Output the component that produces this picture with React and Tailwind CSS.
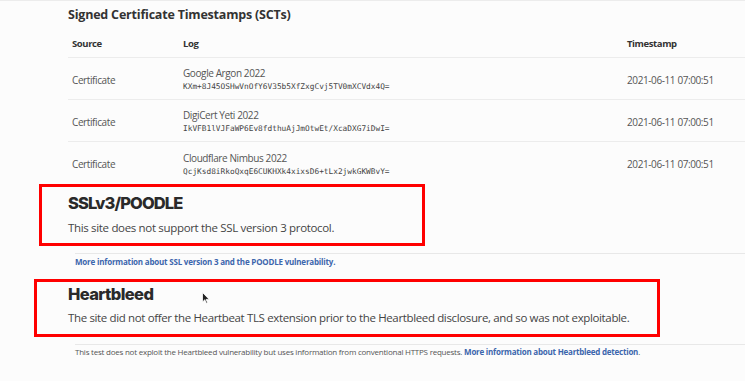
export default function App() {
  const rows = [
    ["Google Argon 2022", "KXm+8J45OSHwVnOfY6V35b5XfZxgCvj5TV0mXCVdx4Q="],
    ["DigiCert Yeti 2022", "IkVFB1lVJFaWP6Ev8fdthuAjJmOtwEt/XcaDXG7iDwI="],
    ["Cloudflare Nimbus 2022", "QcjKsd8iRkoQxqE6CUKHXk4xixsD6+tLx2jwkGKWBvY="],
  ];
  return (
    <div className="relative w-[745px] h-[381px] overflow-hidden bg-[#fcfcfc] text-[#333]" style={{ fontFamily: '"Open Sans", sans-serif' }}>
      <div className="h-px bg-[#ececec]" />
      <div className="pl-[68px] pt-[5px]">
        <h2 className="text-[12.5px] font-bold leading-[18px] tracking-[-0.2px] text-[#333]">Signed Certificate Timestamps (SCTs)</h2>
        <div className="mt-[6px]">
          <div className="grid grid-cols-[115px_444px_1fr] h-[28px] items-center pt-[1px] border-b border-[#ececec] text-[9.5px] font-bold tracking-[-0.4px] text-[#333]">
            <div className="pl-[4px]">Source</div>
            <div>Log</div>
            <div>Timestamp</div>
          </div>
          {rows.map(([name, hash], i) => (
            <div key={i} className={`grid grid-cols-[115px_444px_1fr] h-[42px] items-center pt-[3px] text-[10px] tracking-[-0.4px] text-[#555] ${i < 2 ? "border-b border-[#ececec]" : ""}`}>
              <div className="pl-[4px]">Certificate</div>
              <div className="flex flex-col">
                <div className="leading-[14px]">{name}</div>
                <div className="text-[7.8px] leading-[14px] tracking-normal text-[#444]" style={{ fontFamily: '"DejaVu Sans Mono", monospace' }}>{hash}</div>
              </div>
              <div>2021-06-11 07:00:51</div>
            </div>
          ))}
        </div>
      </div>
      <div className="ml-[39px] w-[386px] h-[62px] border-[3px] border-[#ff0000] pl-[26px] pt-[6px]">
        <div className="text-[16.5px] font-extrabold leading-[20px] tracking-[-0.9px] text-[#2a2a2a]" style={{ fontFamily: 'Inter, sans-serif' }}>SSLv3/POODLE</div>
        <div className="mt-[7px] text-[11.5px] leading-[16px] tracking-[-0.33px] text-[#444]">This site does not support the SSL version 3 protocol.</div>
      </div>
      <div className="ml-[75px] mt-[7px] border-t border-[#e8e8e8] pt-[2px] h-[26px]">
        <div className="text-[8px] font-bold leading-[12px] tracking-[-0.2px] text-[#3c66ad]">More information about SSL version 3 and the POODLE vulnerability.</div>
      </div>
      <div className="ml-[34px] w-[626px] h-[58px] border-[3px] border-[#ff0000] pl-[31px] pt-[2px]">
        <div className="text-[16.5px] font-extrabold leading-[20px] tracking-[-0.6px] text-[#2a2a2a]" style={{ fontFamily: 'Inter, sans-serif' }}>Heartbleed</div>
        <div className="mt-[6px] text-[11.5px] leading-[16px] tracking-[-0.36px] text-[#444]">The site did not offer the Heartbeat TLS extension prior to the Heartbleed disclosure, and so was not exploitable.</div>
      </div>
      <div className="ml-[75px] mt-[7px] border-t border-[#e8e8e8] pt-[1px]">
        <div className="text-[8px] leading-[12px] tracking-[-0.23px] text-[#555]">
          This test does not exploit the Heartbleed vulnerability but uses information from conventional HTTPS requests.{" "}
          <span className="font-bold text-[#3c66ad]">More information about Heartbleed detection</span>.
        </div>
      </div>
      <svg className="absolute left-[202px] top-[292px]" width="8" height="12" viewBox="0 0 8 12">
        <path d="M0.5 0.5 L0.5 10 L2.8 7.8 L4.4 11.3 L5.6 10.8 L4.1 7.4 L7.2 7.4 Z" fill="#222" stroke="#fff" strokeWidth="0.8" />
      </svg>
    </div>
  );
}
